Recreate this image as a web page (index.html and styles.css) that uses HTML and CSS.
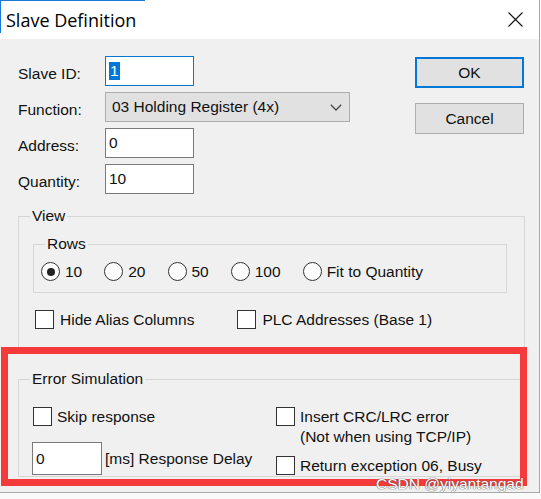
FILE: index.html
```html
<!DOCTYPE html>
<html>
<head>
<meta charset="utf-8">
<title>Slave Definition</title>
<link rel="stylesheet" href="styles.css">
</head>
<body>
<div class="dialog">
  <div class="titlebar">
    <span class="title">Slave Definition</span>
    <svg class="close" viewBox="0 0 15 15" width="15" height="15"><path d="M0.5 0.5 L14.5 14.5 M14.5 0.5 L0.5 14.5" stroke="#111" stroke-width="1.1" fill="none"/></svg>
  </div>
  <div class="content">
    <div class="top">
      <div class="form">
        <span class="lbl">Slave ID:</span>
        <div class="field focus"><span class="sel">1</span></div>
        <span class="lbl">Function:</span>
        <div class="combo"><span>03 Holding Register (4x)</span><svg class="chev" viewBox="0 0 12 7" width="12" height="7"><path d="M0.8 0.8 L6 6 L11.2 0.8" stroke="#444" stroke-width="1.3" fill="none"/></svg></div>
        <span class="lbl">Address:</span>
        <div class="field">0</div>
        <span class="lbl">Quantity:</span>
        <div class="field">10</div>
      </div>
      <div class="buttons">
        <div class="btn default">OK</div>
        <div class="btn">Cancel</div>
      </div>
    </div>

    <fieldset class="group view">
      <legend>View</legend>
      <div class="gbody">
        <fieldset class="group rows">
          <legend>Rows</legend>
          <div class="gbody">
            <div class="radios">
              <div class="radio-item"><span class="radio on"></span><span>10</span></div>
              <div class="radio-item"><span class="radio"></span><span>20</span></div>
              <div class="radio-item"><span class="radio"></span><span>50</span></div>
              <div class="radio-item"><span class="radio"></span><span>100</span></div>
              <div class="radio-item"><span class="radio"></span><span>Fit to Quantity</span></div>
            </div>
          </div>
        </fieldset>
        <div class="checks">
          <div class="check-item"><span class="box"></span><span>Hide Alias Columns</span></div>
          <div class="check-item"><span class="box"></span><span>PLC Addresses (Base 1)</span></div>
        </div>
      </div>
    </fieldset>

    <fieldset class="group err">
      <legend>Error Simulation</legend>
      <div class="gbody">
        <div class="col">
          <div class="check-item tight"><span class="box"></span><span>Skip response</span></div>
          <div class="delay-row"><div class="field delay">0</div><span>[ms] Response Delay</span></div>
        </div>
        <div class="col">
          <div class="check-item tight multi"><span class="box"></span><span class="ml">Insert CRC/LRC error<br>(Not when using TCP/IP)</span></div>
          <div class="check-item tight ret"><span class="box"></span><span>Return exception 06, Busy</span></div>
        </div>
      </div>
    </fieldset>
  </div>
  <div class="highlight"></div>
  <div class="watermark">CSDN @yiyantangad</div>
</div>
</body>
</html>
```

FILE: styles.css
```css
* { box-sizing: border-box; }
html, body { margin: 0; padding: 0; }
body {
  background: #fafafa;
  font-family: "Liberation Sans", Arial, sans-serif;
  font-size: 15.5px;
  color: #111;
  width: 541px;
  height: 499px;
  overflow: hidden;
}
.dialog {
  width: 540px;
  height: 493px;
  background: #f0f0f0;
  border-right: 1px solid #a8a8a8;
  border-bottom: 1px solid #a8a8a8;
  position: relative;
  overflow: hidden;
}
.titlebar {
  height: 39px;
  background:
    linear-gradient(#1a78d8, #1a78d8) no-repeat 0 0 / 145px 1px,
    linear-gradient(#1a78d8, #1a78d8) no-repeat 0 0 / 1px 33px,
    #fff;
  display: flex;
  align-items: center;
  justify-content: space-between;
  padding: 0 16px 0 6px;
}
.title {
  font-family: "Open Sans", sans-serif;
  font-size: 18px;
  color: #000;
}
.close { display: block; }
.content { padding: 17px 14px 0 18px; }
.top {
  display: flex;
  justify-content: space-between;
  align-items: flex-start;
}
.form {
  display: grid;
  grid-template-columns: 87px auto;
  row-gap: 6px;
  align-items: center;
}
.lbl { padding-top: 6px; }
.field {
  width: 89px;
  height: 30px;
  background: #fff;
  border: 1px solid #7a7a7a;
  padding-left: 3px;
  display: flex;
  align-items: center;
}
.field.focus { border-color: #0078d7; }
.sel {
  background: #0078d7;
  color: #fff;
  padding: 0 1px;
  line-height: 18px;
}
.combo {
  width: 245px;
  height: 30px;
  background: #e1e1e1;
  border: 1px solid #adadad;
  display: flex;
  align-items: center;
  justify-content: space-between;
  padding: 0 7px 0 6px;
}
.chev { display: block; }
.buttons {
  display: flex;
  flex-direction: column;
  gap: 15px;
  margin-top: 1px;
  margin-right: 1px;
}
.btn {
  width: 109px;
  height: 31px;
  background: #e1e1e1;
  border: 1px solid #adadad;
  display: flex;
  align-items: center;
  justify-content: center;
}
.btn.default { border: 2px solid #0078d7; }

fieldset.group {
  margin: 0;
  padding: 0;
  border: 1px solid #d6d6d6;
  min-width: 0;
}
.group > legend {
  margin-left: 11px;
  padding: 0 2px;
  line-height: 18px;
}
fieldset.group.view { margin-top: 13px; }
.view > .gbody { padding: 10px 17px 21px 14px; }
.rows > .gbody { padding: 9px 0 11px 7px; }
.radios { display: flex; gap: 22px; }
.radio-item {
  display: flex;
  align-items: center;
  gap: 5px;
  height: 19px;
}
.radio {
  width: 19px;
  height: 19px;
  border-radius: 50%;
  border: 1.5px solid #333;
  background: #fff;
  display: flex;
  align-items: center;
  justify-content: center;
  flex: none;
}
.radio.on::after {
  content: "";
  width: 8px;
  height: 8px;
  border-radius: 50%;
  background: #222;
}
.checks {
  display: flex;
  gap: 43px;
  margin-top: 17px;
  padding-left: 2px;
}
.check-item {
  display: flex;
  align-items: center;
  gap: 6px;
  height: 19px;
}
.check-item.tight { gap: 5px; }
.box {
  width: 19px;
  height: 19px;
  border: 1.5px solid #333;
  background: #fff;
  flex: none;
}
fieldset.group.err { margin-top: 19px; margin-right: 4px; }
.err > .gbody {
  padding: 19px 0 1px 14px;
  display: grid;
  grid-template-columns: 243px auto;
}
.delay-row {
  display: flex;
  align-items: center;
  gap: 3px;
  margin-top: 16px;
  margin-left: -1px;
}
.field.delay { width: 70px; height: 33px; }
.check-item.multi { align-items: flex-start; height: 40px; }
.ml { line-height: 20px; }
.check-item.ret { margin-top: 9px; }
.highlight {
  position: absolute;
  left: 1px;
  top: 347px;
  width: 526px;
  height: 139px;
  border: 7px solid #f43a3a;
}
.watermark {
  position: absolute;
  left: 376px;
  top: 475px;
  line-height: 18px;
  color: #fff;
  text-shadow: 0 0 1px #555, 0 0 1px #555;
}
```
